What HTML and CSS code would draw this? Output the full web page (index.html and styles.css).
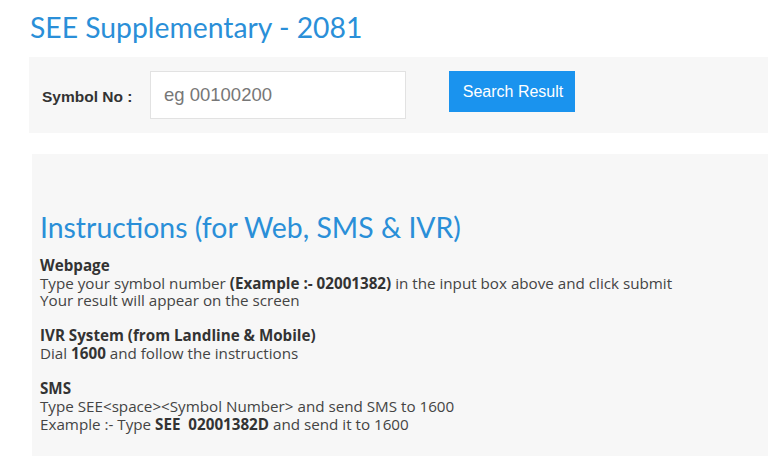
FILE: index.html
```html
<!DOCTYPE html>
<html>
<head>
<meta charset="utf-8">
<link rel="stylesheet" href="styles.css">
</head>
<body>
<div class="page">
  <h1 class="title">SEE Supplementary - 2081</h1>
  <form class="search">
    <label class="label">Symbol No :</label>
    <input class="field" type="text" placeholder="eg 00100200">
    <button class="btn" type="button">Search Result</button>
  </form>
  <section class="panel">
    <h2 class="heading">Instructions (for Web, SMS &amp; IVR)</h2>
    <div class="block">
      <div class="bold">Webpage</div>
      <div>Type your symbol number <b>(Example :- 02001382)</b> in the input box above and click submit</div>
      <div>Your result will appear on the screen</div>
    </div>
    <div class="block">
      <div class="bold">IVR System (from Landline &amp; Mobile)</div>
      <div>Dial <b>1600</b> and follow the instructions</div>
    </div>
    <div class="block">
      <div class="bold">SMS</div>
      <div>Type SEE&lt;space&gt;&lt;Symbol Number&gt; and send SMS to 1600</div>
      <div>Example :- Type <b>SEE&nbsp; 02001382D</b> and send it to 1600</div>
    </div>
  </section>
</div>
</body>
</html>
```

FILE: styles.css
```css
* { box-sizing: border-box; }
html, body { margin: 0; padding: 0; background: #fff; }
body { width: 768px; height: 456px; overflow: hidden; }
.page { padding-left: 29px; }
.title {
  margin: 0;
  padding: 10px 0 0 1px;
  height: 57px;
  font-family: "Lato", sans-serif;
  font-weight: 400;
  font-size: 28.3px;
  color: #2a8fd8;
}
.search {
  margin: 0;
  height: 76px;
  background: #f7f7f7;
  display: flex;
  align-items: flex-start;
  padding: 14px 0 0 13px;
}
.label {
  font-family: "Liberation Sans", Arial, sans-serif;
  font-weight: 700;
  font-size: 15.5px;
  color: #333;
  margin-top: 17px;
  width: 108px;
}
.field {
  width: 256px;
  height: 48px;
  border: 1px solid #e2e2e2;
  background: #fff;
  padding: 0 13px;
  font-family: "Liberation Sans", Arial, sans-serif;
  font-size: 18.5px;
  outline: none;
}
.field::placeholder { color: #777; }
.btn {
  margin-left: 43px;
  width: 126px;
  height: 41px;
  border: none;
  background: #1a93ee;
  color: #fff;
  font-family: "Liberation Sans", Arial, sans-serif;
  font-size: 16px;
  padding: 0 0 0 2px;
}
.panel {
  margin: 21px 0 0 3px;
  height: 302px;
  overflow: hidden;
  background: #f7f7f7;
  padding: 55px 0 0 8px;
  font-family: "Open Sans", sans-serif;
  font-size: 15.2px;
  line-height: 17.7px;
  color: #444;
}
.heading {
  margin: 0 0 12px 0;
  font-family: "Lato", sans-serif;
  font-weight: 400;
  font-size: 28.4px;
  line-height: 36px;
  color: #2a8fd8;
}
.block { margin-bottom: 17.3px; }
.bold, b { font-weight: 700; color: #333; }
```
